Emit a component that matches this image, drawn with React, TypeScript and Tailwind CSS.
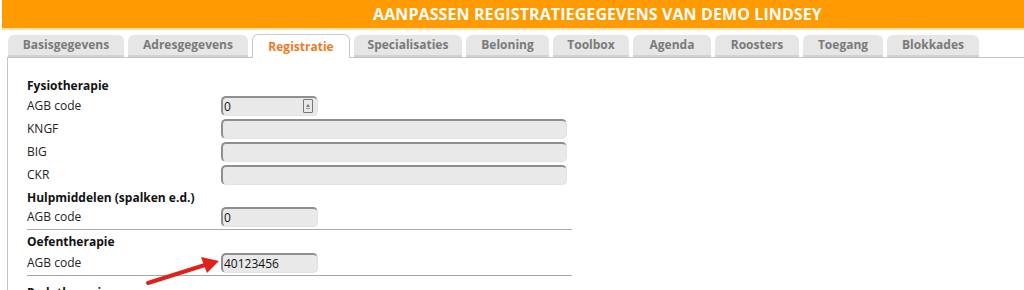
import React from "react";

const tabs = [
  { label: "Basisgegevens", w: "w-[116px]" },
  { label: "Adresgegevens", w: "w-[120px]" },
  { label: "Registratie", w: "w-[98px]", active: true },
  { label: "Specialisaties", w: "w-[108px]" },
  { label: "Beloning", w: "w-[83px]" },
  { label: "Toolbox", w: "w-[76px]" },
  { label: "Agenda", w: "w-[78px]" },
  { label: "Roosters", w: "w-[84px]" },
  { label: "Toegang", w: "w-[80px]" },
  { label: "Blokkades", w: "w-[92px]" },
];

function Field({ value = "", wide = false, spinner = false }: { value?: string; wide?: boolean; spinner?: boolean }) {
  return (
    <div
      className={`relative h-[20px] ${wide ? "w-[346px]" : "w-[97px]"} rounded-[5px] bg-[#e9e9e9] border-t-2 border-l-2 border-[#8f8f8f] border-r border-b border-r-[#e2e2e2] border-b-[#e2e2e2] flex items-center pl-[1px] text-[12px] text-[#111]`}
    >
      {value}
      {spinner && (
        <span className="absolute right-[4px] top-[1px] w-[10px] h-[14px] border border-[#777] rounded-[1px] flex flex-col items-center justify-center gap-[1px]">
          <span className="w-0 h-0 border-l-[2px] border-r-[2px] border-b-[3px] border-l-transparent border-r-transparent border-b-[#777]" />
          <span className="w-[4px] h-[1px] bg-[#999]" />
        </span>
      )}
    </div>
  );
}

function Row({ label, children }: { label: string; children: React.ReactNode }) {
  return (
    <div className="flex items-start h-[23px]">
      <div className="w-[194px] h-[20px] flex items-center text-[12px] text-[#222]">{label}</div>
      {children}
    </div>
  );
}

export default function App() {
  return (
    <div className="relative w-[1024px] h-[290px] overflow-hidden bg-white font-['Open_Sans',sans-serif]">
      {/* HEADER */}
      <div className="ml-[2px] h-[28px] bg-[#ff9a00] flex items-center pl-[371px]">
        <span className="text-white font-bold text-[16px] tracking-[0.1px]">AANPASSEN REGISTRATIEGEGEVENS VAN DEMO LINDSEY</span>
      </div>
      <div className="ml-[2px] h-[2px] bg-[#fbe3b0]" />

      {/* TABS */}
      <div className="flex items-end gap-[4px] pl-[8px] pt-[3px] h-[27px]">
        {tabs.map((t) =>
          t.active ? (
            <div
              key={t.label}
              className={`${t.w} h-[24px] -mb-[1px] bg-white border border-b-0 border-[#c9c9c9] rounded-t-[6px] flex items-center justify-center text-[12px] font-bold text-[#f07a22] relative z-10`}
            >
              {t.label}
            </div>
          ) : (
            <div
              key={t.label}
              className={`${t.w} h-[22px] bg-[#e6e6e6] rounded-t-[6px] border-b-2 border-[#d2d2d2] flex items-center justify-center text-[12px] font-bold text-[#7a7a7a]`}
            >
              {t.label}
            </div>
          )
        )}
      </div>

      {/* CONTENT */}
      <div className="ml-[7px] border-t border-l border-[#c4c4c4] pl-[19px] pt-[18px]">
        <div className="w-[545px]">
          <div className="h-[20px] flex items-center text-[12px] font-bold text-[#111]">Fysiotherapie</div>
          <Row label="AGB code">
            <Field value="0" spinner />
          </Row>
          <Row label="KNGF">
            <Field wide />
          </Row>
          <Row label="BIG">
            <Field wide />
          </Row>
          <Row label="CKR">
            <Field wide />
          </Row>

          <div className="h-[19px] flex items-center text-[12px] font-bold text-[#111]">Hulpmiddelen (spalken e.d.)</div>
          <div className="flex items-start h-[22px]">
            <div className="w-[194px] h-[20px] flex items-center text-[12px] text-[#222]">AGB code</div>
            <Field value="0" />
          </div>
          <div className="h-[1px] bg-[#a8a8a8]" />

          <div className="h-[23px] flex items-center text-[12px] font-bold text-[#111]">Oefentherapie</div>
          <div className="flex items-start h-[22px]">
            <div className="w-[194px] h-[20px] flex items-center text-[12px] text-[#222]">AGB code</div>
            <Field value="40123456" />
          </div>
          <div className="h-[1px] bg-[#a8a8a8]" />

          <div className="pt-[8px] text-[12px] leading-[18px] font-bold text-[#111]">Podotherapie</div>
        </div>
      </div>

      {/* ANNOTATION ARROW */}
      <svg className="absolute left-0 top-0 pointer-events-none" width="1024" height="290" viewBox="0 0 1024 290">
        <line x1="148" y1="283" x2="205" y2="265" stroke="#e0201b" strokeWidth="4" strokeLinecap="round" />
        <polygon points="219,261 201,257 207,273" fill="#e0201b" />
      </svg>
    </div>
  );
}
